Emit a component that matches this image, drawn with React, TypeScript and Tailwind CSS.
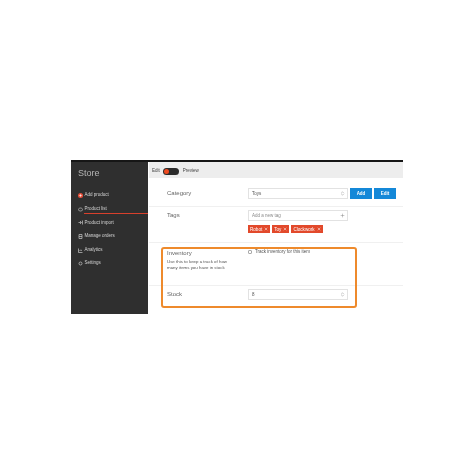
import { Plus, X, ChevronsUpDown } from "lucide-react";

const NAV = [
  { label: "Add product", icon: "add" },
  { label: "Product list", icon: "eye", active: true },
  { label: "Product import", icon: "import" },
  { label: "Manage orders", icon: "orders" },
  { label: "Analytics", icon: "chart" },
  { label: "Settings", icon: "gear" },
];

function NavIcon({ name }: { name: string }) {
  if (name === "add") {
    return (
      <svg viewBox="0 0 10 10" className="h-[5px] w-[5px] shrink-0">
        <circle cx="5" cy="5" r="5" fill="#e8503a" />
        <path d="M5 2.5v5M2.5 5h5" stroke="#fff" strokeWidth="1.2" />
      </svg>
    );
  }
  return (
    <svg viewBox="0 0 10 10" className="h-[5px] w-[5px] shrink-0 text-[#c9c9c9]" fill="none" stroke="currentColor" strokeWidth="1.4">
      {name === "eye" && <path d="M0 5c3-4 7-4 10 0-3 4-7 4-10 0z" />}
      {name === "import" && <path d="M1 5h5M4 2l3 3-3 3M9 1v8" />}
      {name === "orders" && <path d="M2 1h6v8H2zM2 5h6" />}
      {name === "chart" && <path d="M1 1v8h8M3 6l2-2 3 1" />}
      {name === "gear" && <circle cx="5" cy="5" r="3" />}
    </svg>
  );
}

function Tag({ label }: { label: string }) {
  return (
    <span className="flex h-[8px] items-center gap-[2px] bg-[#e2492b] px-[2px] text-[4.6px] text-white">
      <span className="pt-[2px]">{label}</span>
      <X className="h-[4px] w-[4px]" strokeWidth={3} />
    </span>
  );
}

export default function App() {
  return (
    <div className="h-[474px] w-[474px] overflow-hidden bg-white pl-[71px] pt-[160px] font-['Liberation_Sans',sans-serif] blur-[0.35px]">
      <div className="relative flex h-[154px] w-[332px] border-t-2 border-[#161616]">
        <aside className="w-[77px] shrink-0 bg-[#2f2f2f] text-[#d4d4d4]">
          <div className="pl-[7px] pt-[6px] text-[9px] leading-[11px] text-[#b5b5b5]">Store</div>
          <nav className="mt-[10px] flex flex-col">
            {NAV.map((item) => (
              <div key={item.label} className="relative flex h-[13.6px] items-center gap-[1.5px] pl-[7px] text-[4.5px]">
                <NavIcon name={item.icon} />
                {item.label}
                {item.active && <span className="absolute bottom-[2px] left-[13px] right-0 h-px bg-[#d8402c]" />}
              </div>
            ))}
          </nav>
        </aside>

        <main className="ml-px flex-1 bg-white text-[#555]">
          <div className="flex h-[16px] items-center gap-[2px] bg-[#ededed] pl-[3px] pt-[3px] text-[4.5px] text-[#444]">
            Edit
            <span className="ml-[1px] flex h-[7px] w-[16px] items-center rounded-full bg-[#2b2b2b] px-[1px]">
              <span className="h-[5px] w-[5px] rounded-full bg-[#ef4a1f]" />
            </span>
            <span className="ml-[2px]">Preview</span>
          </div>

          <div className="flex h-[29px] items-start border-b border-[#f0f0f0] pl-[18px] pt-[10px]">
            <span className="w-[81px] text-[6px] leading-[11px] text-[#666]">Category</span>
            <div className="flex h-[11px] w-[100px] items-center justify-between border border-[#e2e2e2] pl-[3px] pr-[2px] text-[4.5px] text-[#555]">
              <span className="pt-[2px]">Toys</span>
              <ChevronsUpDown className="h-[5px] w-[5px] text-[#777]" />
            </div>
            <button className="ml-[2px] h-[11px] w-[22px] bg-[#1488d8] pt-[2px] text-[4.5px] font-bold text-white">Add</button>
            <button className="ml-[2px] h-[11px] w-[22px] bg-[#1488d8] pt-[2px] text-[4.5px] font-bold text-white">Edit</button>
          </div>

          <div className="flex h-[36px] border-b border-[#f0f0f0] pl-[18px] pt-[3px]">
            <span className="w-[81px] text-[6px] leading-[11px] text-[#666]">Tags</span>
            <div>
              <div className="flex h-[11px] w-[100px] items-center justify-between border border-[#e2e2e2] pl-[3px] pr-[2px] text-[4.5px] text-[#888]">
                <span className="pt-[2px]">Add a new tag</span>
                <Plus className="h-[5px] w-[5px] text-[#777]" />
              </div>
              <div className="mt-[4px] flex gap-[2px]">
                <Tag label="Robot" />
                <Tag label="Toy" />
                <Tag label="Clockwork" />
              </div>
            </div>
          </div>

          <div className="flex h-[43px] border-b border-[#f0f0f0] pl-[18px] pt-[6px]">
            <div className="w-[81px]">
              <div className="text-[6px] leading-[8px] text-[#666]">Inventory</div>
              <p className="mt-[1.5px] w-[66px] text-[4.4px] leading-[6.5px] text-[#555]">
                Use this to keep a track of how many items you have in stock
              </p>
            </div>
            <label className="flex h-[6px] items-center gap-[3px] text-[4.5px] text-[#555]">
              <span className="h-[4px] w-[4px] rounded-[1px] border border-[#aaa]" />
              Track inventory for this item
            </label>
          </div>

          <div className="flex h-[27px] items-start pl-[18px] pt-[3px]">
            <span className="w-[81px] text-[6px] leading-[11px] text-[#666]">Stock</span>
            <div className="flex h-[11px] w-[100px] items-center justify-between border border-[#e2e2e2] pl-[3px] pr-[2px] text-[4.5px] text-[#555]">
              <span className="pt-[2px]">8</span>
              <ChevronsUpDown className="h-[5px] w-[5px] text-[#777]" />
            </div>
          </div>
        </main>

        <div className="absolute left-[90px] top-[85px] h-[61px] w-[196px] rounded-[3px] border-2 border-[#ee8a2c]" />
      </div>
    </div>
  );
}
